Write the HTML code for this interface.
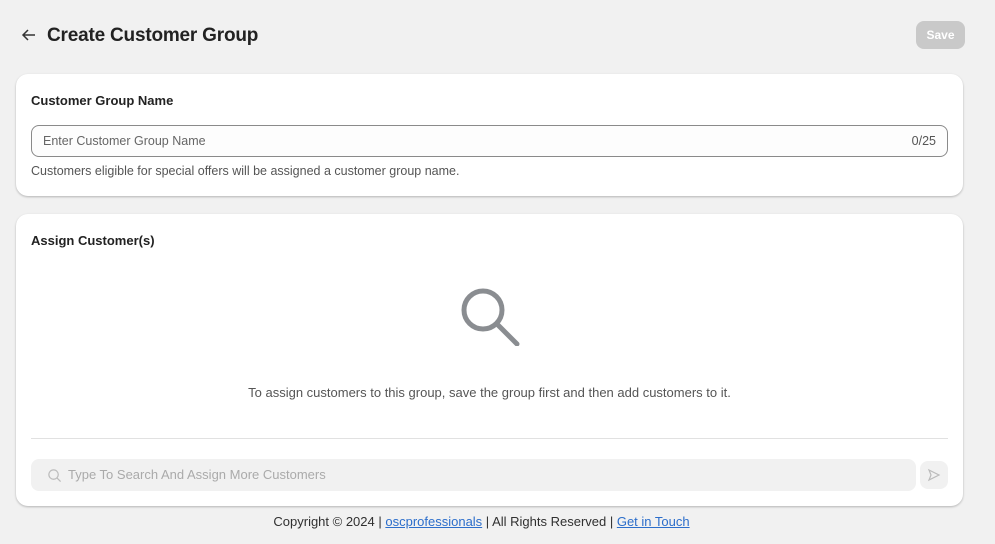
<!DOCTYPE html>
<html><head><style>
*{box-sizing:border-box;margin:0;padding:0}
body{width:995px;height:544px;background:#f1f1f1;font-family:"Liberation Sans",sans-serif;color:#303030;position:relative;overflow:hidden}
.abs{position:absolute}
.card{position:absolute;left:16px;width:947px;background:#fff;border-radius:12px;box-shadow:0 1px 2px rgba(0,0,0,.25)}
h1{position:absolute;left:47px;top:25px;font-size:19px;font-weight:bold;color:#222;letter-spacing:-0.2px}
.lbl{position:absolute;left:15px;font-size:13px;font-weight:bold;color:#222}
a{color:#2c6ecb;text-decoration:underline}
</style></head><body>
<svg class="abs" style="left:21px;top:28px" width="16" height="14" viewBox="0 0 16 14"><path d="M14 7H2M7 2L2 7l5 5" stroke="#333" stroke-width="1.5" fill="none"/></svg>
<h1>Create Customer Group</h1>
<div class="abs" style="left:916px;top:21px;width:49px;height:28px;background:#c9c9c9;border-radius:8px;color:#fff;font-size:12px;font-weight:bold;text-align:center;line-height:28px">Save</div>
<div class="card" style="top:74px;height:122px">
<div class="lbl" style="top:19px">Customer Group Name</div>
<div class="abs" style="left:15px;top:51px;width:917px;height:32px;border:1px solid #8a8a8a;border-radius:8px;background:#fdfdfd;font-size:12.5px;color:#666;line-height:30px;padding:0 11px">Enter Customer Group Name<span style="float:right;color:#555">0/25</span></div>
<div class="abs" style="left:15px;top:90px;font-size:12.5px;color:#555">Customers eligible for special offers will be assigned a customer group name.</div>
</div>
<div class="card" style="top:214px;height:292px">
<div class="lbl" style="top:19px">Assign Customer(s)</div>
<svg class="abs" style="left:443px;top:70px" width="62" height="62" viewBox="0 0 62 62"><circle cx="24" cy="26" r="19" stroke="#8a8d91" stroke-width="5" fill="none"/><path d="M38 40l20 20" stroke="#8a8d91" stroke-width="5" stroke-linecap="round"/></svg>
<div class="abs" style="left:0;width:947px;top:171px;text-align:center;font-size:13px;color:#555">To assign customers to this group, save the group first and then add customers to it.</div>
<div class="abs" style="left:15px;top:224px;width:917px;height:1px;background:#e1e1e1"></div>
<div class="abs" style="left:15px;top:245px;width:885px;height:32px;background:#f1f1f1;border-radius:8px;font-size:13px;color:#aaa;line-height:32px;padding-left:37px">Type To Search And Assign More Customers</div>
<svg class="abs" style="left:31px;top:254px" width="15" height="15" viewBox="0 0 16 16"><circle cx="7" cy="7" r="5" stroke="#bbb" stroke-width="1.3" fill="none"/><path d="M10.5 10.5l4 4" stroke="#bbb" stroke-width="1.3"/></svg>
<div class="abs" style="left:904px;top:247px;width:28px;height:28px;background:#f1f1f1;border-radius:8px"></div>
<svg class="abs" style="left:911px;top:254px" width="14" height="14" viewBox="0 0 14 14"><path d="M2 2l10 5-10 5 2-5z" stroke="#bbb" stroke-width="1.2" fill="none"/></svg>
</div>
<div class="abs" style="left:0;width:963px;top:514px;text-align:center;font-size:13px;color:#303030">Copyright © 2024 | <a>oscprofessionals</a> | All Rights Reserved | <a>Get in Touch</a></div>
</body></html>
